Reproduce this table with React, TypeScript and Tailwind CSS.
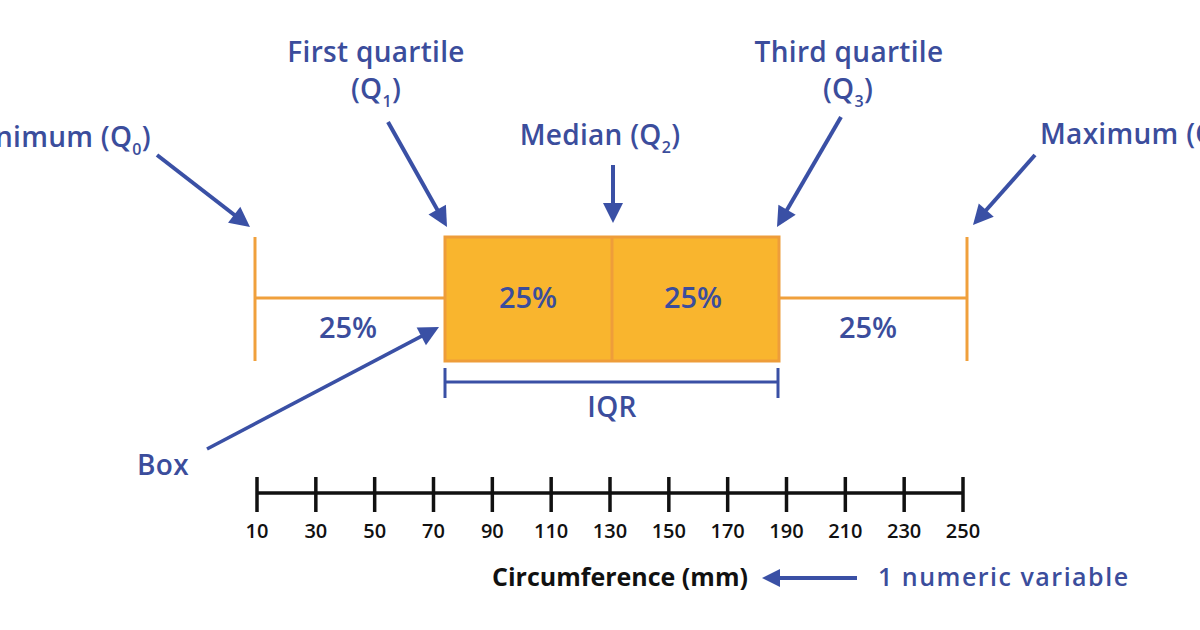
import React from "react";

const BLUE = "#3a50a5";
const ORANGE = "#f0a03c";

interface ArrowProps {
  x1: number;
  y1: number;
  x2: number;
  y2: number;
  width?: number;
  head?: number;
  half?: number;
}

// straight arrow, (x2, y2) is the tip
function Arrow({ x1, y1, x2, y2, width = 4, head = 20, half = 10 }: ArrowProps) {
  const dx = x2 - x1;
  const dy = y2 - y1;
  const len = Math.hypot(dx, dy);
  const ux = dx / len;
  const uy = dy / len;
  const bx = x2 - ux * head;
  const by = y2 - uy * head;
  const nx = -uy;
  const ny = ux;
  const points = [
    `${x2},${y2}`,
    `${bx + nx * half},${by + ny * half}`,
    `${bx - nx * half},${by - ny * half}`,
  ].join(" ");
  return (
    <g>
      <line x1={x1} y1={y1} x2={bx + ux * 2} y2={by + uy * 2} stroke={BLUE} strokeWidth={width} />
      <polygon points={points} fill={BLUE} />
    </g>
  );
}

function Sub({ n }: { n: string }) {
  return (
    <>
      <tspan className="text-[16px]" dy={8}>
        {n}
      </tspan>
      <tspan dy={-8}>)</tspan>
    </>
  );
}

const ticks = [10, 30, 50, 70, 90, 110, 130, 150, 170, 190, 210, 230, 250];

export default function App() {
  const label = "fill-[#3b4d9c] text-[28px] font-semibold tracking-[0.3px]";
  const pct = "fill-[#3b4d9c] text-[29px] font-semibold";

  return (
    <div className="w-[1200px] h-[630px] bg-white overflow-hidden font-['Open_Sans',sans-serif]">
      <svg width={1200} height={630} viewBox="0 0 1200 630">
        {/* whiskers */}
        <g stroke={ORANGE} strokeWidth={3}>
          <line x1={255} y1={237} x2={255} y2={361} />
          <line x1={255} y1={298} x2={444} y2={298} />
          <line x1={780} y1={298} x2={967} y2={298} />
          <line x1={967} y1={237} x2={967} y2={361} />
        </g>

        {/* box */}
        <rect x={445} y={237} width={334} height={124} fill="#f9b52e" stroke="#ee9d3a" strokeWidth={3} />
        <line x1={612} y1={238} x2={612} y2={360} stroke="#ee9d3a" strokeWidth={3} />

        {/* IQR bracket */}
        <g stroke={BLUE} strokeWidth={3}>
          <line x1={445} y1={382} x2={778} y2={382} />
          <line x1={445} y1={368} x2={445} y2={398} />
          <line x1={778} y1={368} x2={778} y2={398} />
        </g>

        {/* arrows */}
        <Arrow x1={157} y1={155} x2={250} y2={227} />
        <Arrow x1={388} y1={122} x2={447} y2={227} />
        <Arrow x1={613} y1={165} x2={613} y2={223} />
        <Arrow x1={841} y1={117} x2={777} y2={227} />
        <Arrow x1={1035} y1={155} x2={973} y2={225} />
        <Arrow x1={207} y1={449} x2={439} y2={327} width={3.5} />
        <Arrow x1={857} y1={578} x2={762} y2={578} head={18} half={9} />

        {/* labels */}
        <text x={376} y={62} textAnchor="middle" className={label}>
          First quartile
        </text>
        <text x={376} y={99} textAnchor="middle" className={label}>
          (Q<Sub n="1" />
        </text>
        <text x={151} y={147} textAnchor="end" className={label}>
          Minimum (Q<Sub n="0" />
        </text>
        <text x={600} y={145} textAnchor="middle" className={label}>
          Median (Q<Sub n="2" />
        </text>
        <text x={849} y={62} textAnchor="middle" className={label}>
          Third quartile
        </text>
        <text x={848} y={99} textAnchor="middle" className={label}>
          (Q<Sub n="3" />
        </text>
        <text x={1040} y={144} className={label}>
          Maximum (Q<Sub n="4" />
        </text>

        <text x={348} y={338} textAnchor="middle" className={pct}>
          25%
        </text>
        <text x={528} y={308} textAnchor="middle" className={pct}>
          25%
        </text>
        <text x={693} y={308} textAnchor="middle" className={pct}>
          25%
        </text>
        <text x={868} y={338} textAnchor="middle" className={pct}>
          25%
        </text>

        <text x={612} y={417} textAnchor="middle" className={label}>
          IQR
        </text>
        <text x={137} y={475} className={label}>
          Box
        </text>

        {/* axis */}
        <line x1={257} y1={493} x2={963} y2={493} stroke="#111" strokeWidth={3.5} />
        {ticks.map((t, i) => {
          const x = 257 + (i * (963 - 257)) / 12;
          return (
            <g key={t}>
              <line x1={x} y1={477} x2={x} y2={512} stroke="#111" strokeWidth={3.5} />
              <text x={x} y={538} textAnchor="middle" className="fill-[#111] text-[20px] font-semibold">
                {t}
              </text>
            </g>
          );
        })}

        <text x={492} y={586} className="fill-[#111] text-[25px] font-bold">
          Circumference (mm)
        </text>
        <text x={878} y={586} className="fill-[#3b4d9c] text-[25px] font-semibold tracking-[1.5px]">
          1 numeric variable
        </text>
      </svg>
    </div>
  );
}
